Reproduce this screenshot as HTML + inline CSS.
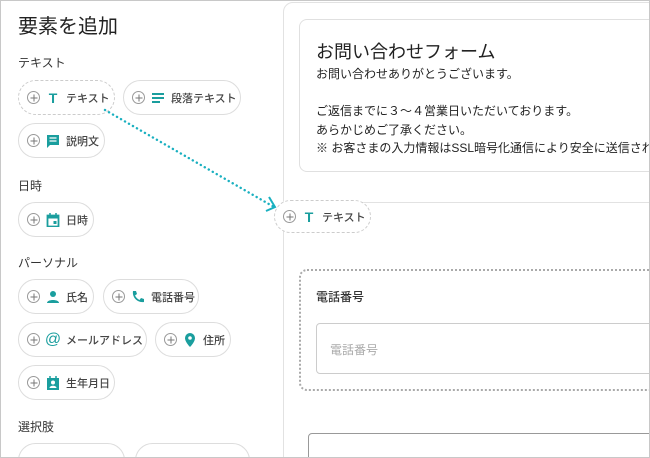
<!DOCTYPE html>
<html><head><meta charset="utf-8"><style>
*{box-sizing:border-box;margin:0;padding:0}
html,body{width:650px;height:458px;overflow:hidden}
body{background:#fff;font-family:"Liberation Sans","Noto Sans CJK JP",sans-serif;color:#333;position:relative}
#wrap{position:absolute;left:0;top:0;width:650px;height:458px;overflow:hidden}
.frame{position:absolute;left:0;top:0;width:650px;height:458px;border:1px solid #c8c8c8;pointer-events:none;z-index:10}
.abs{position:absolute}
h1{position:absolute;left:18px;top:10px;font-size:20px;font-weight:400;color:#222}
.lbl{position:absolute;left:18px;font-size:12px;color:#333}
.chip{position:absolute;height:35px;border:1px solid #ddd;border-radius:18px;background:#fff;display:flex;align-items:center;padding-left:8px;font-size:11px;font-weight:500;color:#444;white-space:nowrap}
.chip.d{border:1px dashed #ccc}
.plus{width:13px;height:13px;border:1px solid #999;border-radius:50%;position:relative;margin-right:6px;flex:none}
.plus:before,.plus:after{content:"";position:absolute;background:#777;left:50%;top:50%;transform:translate(-50%,-50%)}
.plus:before{width:7px;height:1px}.plus:after{width:1px;height:7px}
.ic{width:14px;height:14px;margin-right:6px;flex:none;color:#1a9e9e;display:flex;align-items:center;justify-content:center;font-weight:700;font-size:14px}
</style></head><body><div id="wrap">
<div class="frame"></div>
<h1>要素を追加</h1>
<div class="lbl" style="top:54px">テキスト</div>
<div class="chip d" style="left:18px;top:80px;width:97px"><span class="plus"></span><span class="ic">T</span>テキスト</div>
<div class="chip" style="left:123px;top:80px;width:118px"><span class="plus"></span><svg class="ic" viewBox="0 0 14 14"><path d="M1 3h12M1 7h12M1 11h8" stroke="#1a9e9e" stroke-width="2"/></svg>段落テキスト</div>
<div class="chip" style="left:18px;top:123px;width:87px"><span class="plus"></span><svg class="ic" viewBox="0 0 14 14"><path d="M1 1h12v10H4l-3 3z" fill="#1a9e9e"/><path d="M3.5 4h7M3.5 7h7" stroke="#fff" stroke-width="1.3"/></svg>説明文</div>
<div class="lbl" style="top:177px">日時</div>
<div class="chip" style="left:18px;top:202px;width:76px"><span class="plus"></span><svg class="ic" viewBox="0 0 14 14"><path d="M1.5 2.5h11v11h-11z" fill="none" stroke="#1a9e9e" stroke-width="1.8"/><path d="M1.5 2.5h11v3h-11z" fill="#1a9e9e"/><path d="M4 0v3M10 0v3" stroke="#1a9e9e" stroke-width="1.5"/><rect x="7.5" y="8" width="3" height="3" fill="#1a9e9e"/></svg>日時</div>
<div class="lbl" style="top:254px">パーソナル</div>
<div class="chip" style="left:18px;top:279px;width:76px"><span class="plus"></span><svg class="ic" viewBox="0 0 14 14"><circle cx="7" cy="4" r="3" fill="#1a9e9e"/><path d="M1 13c0-4 12-4 12 0z" fill="#1a9e9e"/></svg>氏名</div>
<div class="chip" style="left:103px;top:279px;width:96px"><span class="plus"></span><svg class="ic" viewBox="0 0 14 14"><path d="M2 1l3 0 1 3-2 1.5c1 2 2.5 3.5 4.5 4.5L10 8l3 1v3c-7 1-12-5-11-11z" fill="#1a9e9e"/></svg>電話番号</div>
<div class="chip" style="left:18px;top:322px;width:129px"><span class="plus"></span><span class="ic" style="font-size:16px;font-weight:400">@</span>メールアドレス</div>
<div class="chip" style="left:155px;top:322px;width:76px"><span class="plus"></span><svg class="ic" viewBox="0 0 14 14"><path d="M7 0a5 5 0 0 0-5 5c0 4 5 9 5 9s5-5 5-9a5 5 0 0 0-5-5z" fill="#1a9e9e"/><circle cx="7" cy="5" r="1.8" fill="#fff"/></svg>住所</div>
<div class="chip" style="left:18px;top:365px;width:97px"><span class="plus"></span><svg class="ic" viewBox="0 0 14 14"><rect x="1" y="2" width="12" height="12" fill="#1a9e9e"/><path d="M4 0v3M10 0v3" stroke="#1a9e9e" stroke-width="1.5"/><circle cx="7" cy="6.5" r="2" fill="#fff"/><path d="M3.5 12c0-3 7-3 7 0z" fill="#fff"/></svg>生年月日</div>
<div class="lbl" style="top:418px">選択肢</div>
<div class="chip" style="left:18px;top:443px;width:107px"></div>
<div class="chip" style="left:135px;top:443px;width:115px"></div>

<div class="abs" style="left:283px;top:2px;width:380px;height:470px;border:1px solid #e2e2e2;border-radius:10px 0 0 0"></div>
<div class="abs" style="left:299px;top:19px;width:370px;height:153px;border:1px solid #e0e0e0;border-radius:8px"></div>
<div class="abs" style="left:316px;top:38px;font-size:18px;color:#222;white-space:nowrap">お問い合わせフォーム</div>
<div class="abs" style="left:316px;top:65px;font-size:12px;line-height:18.5px;color:#222;white-space:nowrap">お問い合わせありがとうございます。<br><br>ご返信までに３～４営業日いただいております。<br>あらかじめご了承ください。<br>※ お客さまの入力情報はSSL暗号化通信により安全に送信されます</div>
<div class="abs" style="left:283px;top:202px;width:370px;height:1px;background:#e2e2e2"></div>
<div class="chip d" style="left:274px;top:200px;width:97px;height:33px"><span class="plus"></span><span class="ic">T</span>テキスト</div>
<div class="abs" style="left:299px;top:269px;width:370px;height:122px;border:2px dotted #aaa;border-radius:8px"></div>
<div class="abs" style="left:316px;top:288px;font-size:12px;font-weight:500;color:#333">電話番号</div>
<div class="abs" style="left:316px;top:323px;width:360px;height:51px;border:1px solid #ccc;border-radius:4px"></div>
<div class="abs" style="left:330px;top:341px;font-size:12px;color:#aaa">電話番号</div>
<div class="abs" style="left:308px;top:433px;width:360px;height:40px;border:1px solid #999;border-radius:4px"></div>

<svg class="abs" style="left:0;top:0" width="650" height="458">
<line x1="105" y1="110" x2="274" y2="207" stroke="#1ab0c0" stroke-width="2.4" stroke-dasharray="0.1 4.5" stroke-linecap="round"/>
<path d="M269 197l6 10-9 4" fill="none" stroke="#1ab0c0" stroke-width="2"/>
</svg>
</div></body></html>
